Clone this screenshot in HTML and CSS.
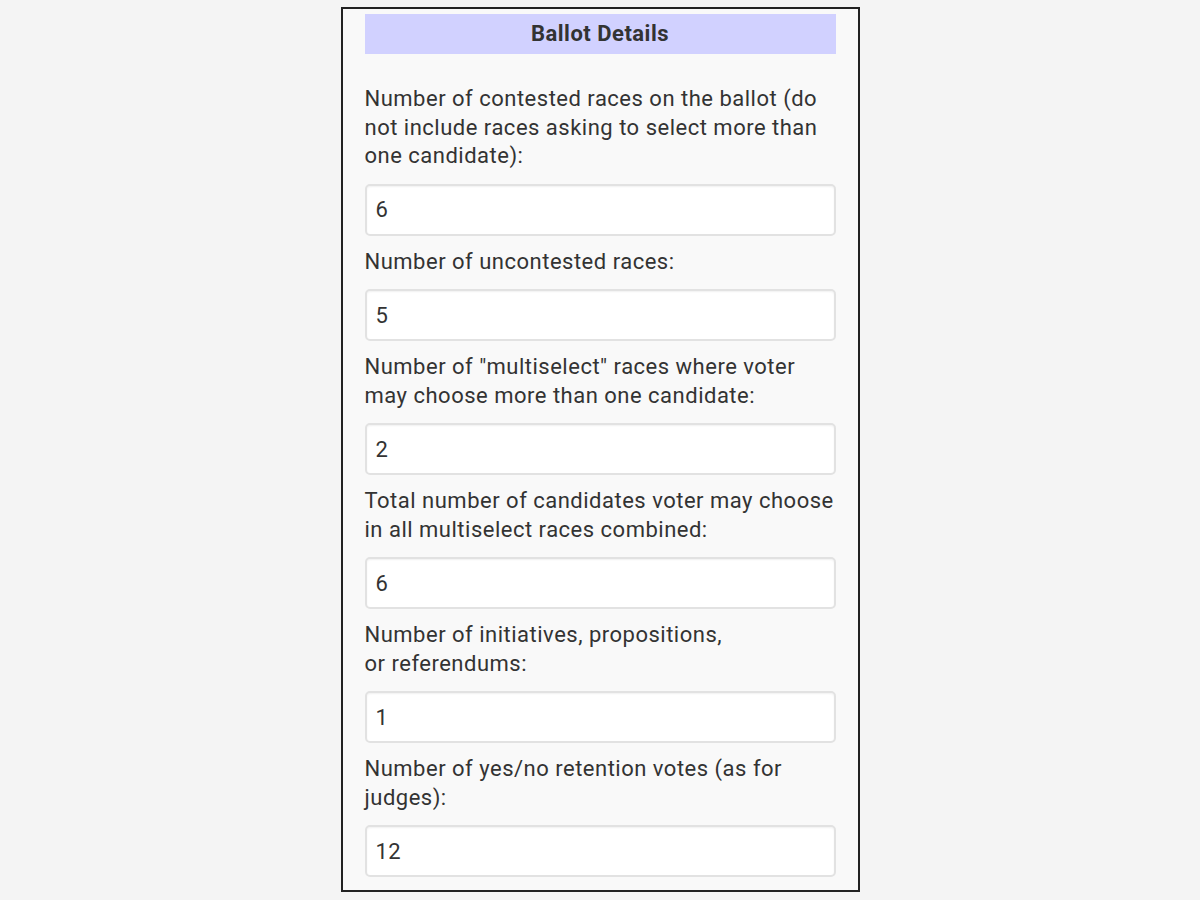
FILE: index.html
```html
<!DOCTYPE html>
<html lang="en">
<head>
  <meta charset="UTF-8" />
  <meta name="viewport" content="width=device-width, initial-scale=1.0" />
  <title>Ballot Details</title>
  <link rel="stylesheet" href="styles.css">
</head>
<body>

  <!-- BALLOT FORM -->
  <div class="panel">
    <h2 class="panel-title">Ballot Details</h2>

    <form class="ballot-form">
      <label for="contested">Number of contested races on the ballot (do not include races asking to select more than one candidate):</label>
      <input type="text" id="contested" value="6" />

      <label for="uncontested">Number of uncontested races:</label>
      <input type="text" id="uncontested" value="5" />

      <label for="multiselect">Number of "multiselect" races where voter may choose more than one candidate:</label>
      <input type="text" id="multiselect" value="2" />

      <label for="multi-total">Total number of candidates voter may choose in all multiselect races combined:</label>
      <input type="text" id="multi-total" value="6" />

      <label for="initiatives">Number of initiatives, propositions,<br>or referendums:</label>
      <input type="text" id="initiatives" value="1" />

      <label for="retention">Number of yes/no retention votes (as for judges):</label>
      <input type="text" id="retention" value="12" />
    </form>
  </div>

</body>
</html>
```

FILE: styles.css
```css
/* RESET */
*, *::before, *::after {
  box-sizing: border-box;
  margin: 0;
  padding: 0;
}

body {
  font-family: Roboto, 'Noto Sans', Arial, sans-serif;
  background-color: #f4f4f4;
  color: #333;
  padding-top: 7px;
}

/* PANEL */
.panel {
  width: 519px;
  margin: 0 auto;
  background-color: #f9f9f9;
  border: 2px solid #222;
  padding: 5px 22px 13px;
}

.panel-title {
  background-color: #d1d1ff;
  height: 40px;
  line-height: 40px;
  text-align: center;
  font-size: 22px;
  letter-spacing: 0.5px;
  font-weight: 700;
  color: #333;
}

/* FORM */
.ballot-form {
  display: flex;
  flex-direction: column;
  padding-top: 31px;
}

.ballot-form label {
  font-size: 22px;
  letter-spacing: 0.5px;
  line-height: 28.5px;
  margin-bottom: 13px;
}

.ballot-form input {
  height: 52px;
  padding: 0 9px;
  font-family: inherit;
  font-size: 22px;
  letter-spacing: 0.5px;
  color: #333;
  background: #fff;
  border: 2px solid #e2e2e2;
  border-radius: 5px;
  box-shadow: inset 0 1px 2px rgba(0, 0, 0, 0.06);
  margin-bottom: 12px;
}

.ballot-form input:last-child {
  margin-bottom: 0;
}
```
